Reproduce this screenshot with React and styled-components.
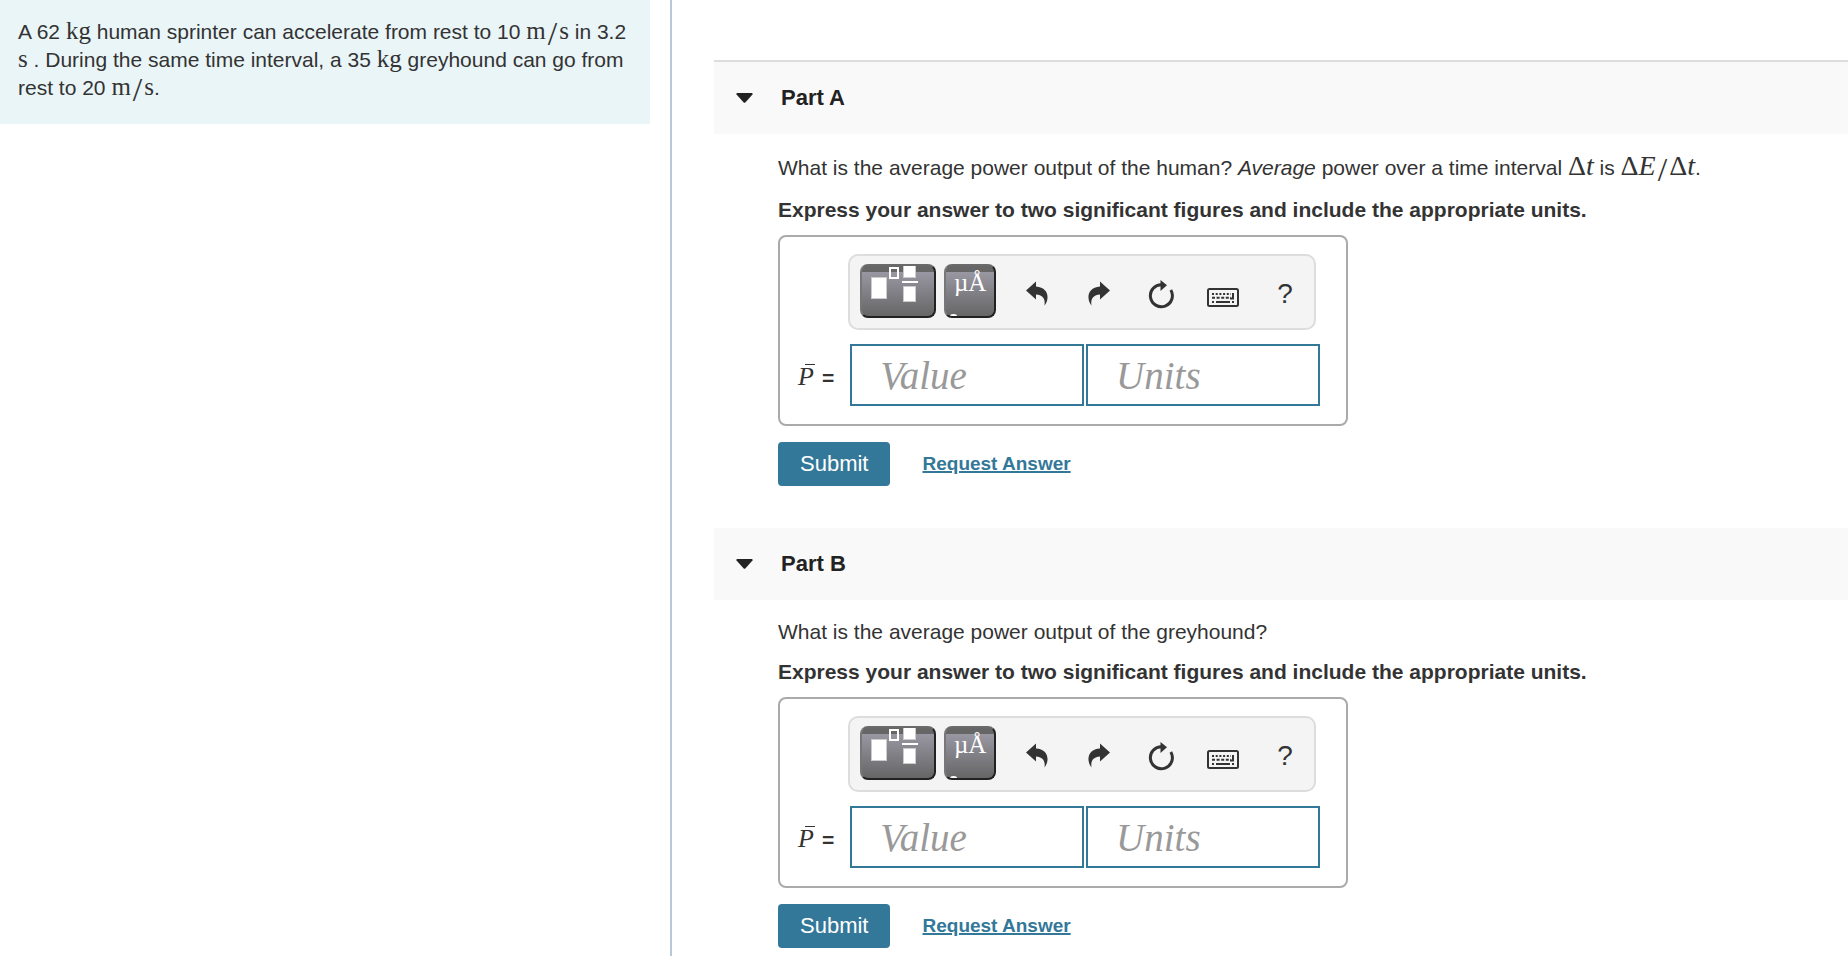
import React, { useState } from 'react';
import styled, { createGlobalStyle } from 'styled-components';

/* ================= STYLES ================= */
const GlobalStyle = createGlobalStyle`
  *{box-sizing:border-box;}
  body{
    margin:0;background:#fff;color:#333;
    font-family:"Liberation Sans",Arial,sans-serif;font-size:21px;line-height:28px;
  }
  button,input{font:inherit;color:inherit;}
`;

const Page = styled.div`display:flex;min-height:100vh;`;
const Sidebar = styled.aside`
  flex:0 0 672px;padding-right:20px;border-right:2px solid #b9c8d6;
`;
const Problem = styled.p`
  margin:0;padding:18px 16px 22px 18px;background:#eaf5f8;
`;
const Main = styled.main`flex:1;min-width:0;padding:60px 0 0 42px;`;

const Part = styled.section`margin-bottom:42px;`;
const PartHeader = styled.h2`
  margin:0;background:#f9f9f9;
  border-top:${p => (p.$divided ? '2px solid #ddd' : 'none')};
`;
const Toggle = styled.button`
  display:flex;align-items:center;gap:28px;width:100%;height:72px;
  padding:0 22px;border:none;background:none;
  font-size:22px;font-weight:bold;color:#222;text-align:left;cursor:pointer;
`;
const PartBody = styled.div`padding:18px 24px 0 64px;`;

const Math = styled.span`
  font-family:"Liberation Serif","Times New Roman",serif;
  font-size:${p => (p.$variables ? '28px' : '25px')};line-height:1;
`;
const Slash = styled.span`
  font-size:34px;line-height:0;margin:0 2px;vertical-align:-6px;
`;
const Question = styled.p`margin:0 0 ${p => (p.$formula ? '14px' : '12px')};`;
const Instruction = styled.p`margin:0 0 11px;font-weight:bold;`;

const AnswerBox = styled.div`
  display:grid;grid-template-columns:max-content minmax(0,1fr);align-items:center;
  column-gap:16px;row-gap:14px;max-width:570px;
  padding:17px 26px 18px 18px;border:2px solid #aaa;border-radius:8px;
`;
const Toolbar = styled.div`
  grid-column:2;display:flex;align-items:flex-start;height:76px;
  margin:0 4px 0 -2px;padding:8px 0 0 10px;
  background:#f4f4f4;border:2px solid #ddd;border-radius:10px;
`;
const PaletteButton = styled.button`
  position:relative;overflow:hidden;flex:none;
  width:${p => p.$width};height:54px;margin-right:8px;padding:0;
  border:2px solid;border-color:#6a6a6a #222 #222 #777;border-radius:8px;
  background:linear-gradient(#666 6px,#9997a2 6px,#666);
  color:#fff;cursor:pointer;
  svg{display:block;}
`;
const UnitGlyphs = styled.span`
  display:block;height:50px;
  font-family:"Liberation Serif","Times New Roman",serif;font-size:25px;line-height:34px;
  &::after{
    content:'';position:absolute;left:4px;bottom:-2px;
    width:7px;height:4px;border-radius:50%;background:#fff;
  }
`;
const ToolButton = styled.button`
  flex:1;height:60px;padding:0 0 0 4px;border:none;background:none;
  display:flex;align-items:center;justify-content:center;
  font-size:28px;cursor:pointer;
`;
const Symbol = styled.label`
  display:flex;align-items:baseline;gap:8px;padding-top:4px;
  white-space:nowrap;font-weight:bold;
`;
const Mean = styled.i`
  position:relative;
  font-family:"Liberation Serif","Times New Roman",serif;font-size:26px;font-weight:normal;
  &::before{
    content:'';position:absolute;top:1px;right:-1px;
    width:10px;height:1px;background:currentColor;
  }
`;
const Fields = styled.div`display:flex;gap:2px;`;
const Field = styled.input`
  flex:1;min-width:0;height:62px;padding:0 28px;
  border:2px solid #337899;border-radius:0;background:#fff;
  font-family:"Liberation Serif","Times New Roman",serif;font-size:39px;
  &::placeholder{color:#999;opacity:1;font-style:italic;}
`;

const Actions = styled.div`display:flex;align-items:center;gap:32px;margin-top:16px;`;
const Submit = styled.button`
  height:44px;padding:0 22px;border:none;border-radius:4px;
  background:#337899;color:#fff;font-size:22px;cursor:pointer;
`;
const RequestLink = styled.a`
  color:#337899;font-size:19px;font-weight:bold;
  text-decoration:underline;text-decoration-thickness:2px;
`;

/* ================= ICONS ================= */
const Caret = () => (
  <svg width="17" height="10" viewBox="0 0 17 10" aria-hidden="true">
    <path d="M1 0h15q1 0.5 0.5 1.5L9.5 9.2q-1 1-2 0L0.5 1.5Q0 0.5 1 0z" fill="#222" />
  </svg>
);

const TemplateIcon = () => (
  <svg width="72" height="50" viewBox="0 0 72 50" aria-hidden="true">
    <g fill="#fff" stroke="#ccc">
      <rect x="9.5" y="11.5" width="15" height="21" />
      <rect x="41.500" y="-0.500" width="12" height="12" />
      <rect x="41.500" y="20.500" width="12" height="15" />
    </g>
    <rect x="40" y="15" width="16" height="2" fill="#fff" />
    <rect x="28" y="2" width="8" height="10" fill="none" stroke="#fff" strokeWidth="2" />
  </svg>
);

const ArrowIcon = ({ flip }) => (
  <svg width="24" height="26" viewBox="0 0 24 26" aria-hidden="true">
    <path
      transform={flip ? 'translate(24 0) scale(-1 1)' : undefined}
      d="M1 9.500L11 0.500V5.500C19 6 23 11 22.500 17C22.300 20 21 22.500 19.500 24.500C20.500 18 18 14 11 13.500V18.500z"
      fill="#333"
    />
  </svg>
);

const ResetIcon = () => (
  <svg width="26" height="30" viewBox="0 0 26 30" aria-hidden="true">
    <path d="M14 5.700A11 11 0 1 0 22.800 11" fill="none" stroke="#333" strokeWidth="3" />
    <path d="M12.500 1L19 6.300L12.500 12z" fill="#333" />
  </svg>
);

const KeyboardIcon = () => (
  <svg width="32" height="26" viewBox="0 -7 32 26" aria-hidden="true">
    <rect x="1" y="1" width="30" height="17" rx="1.500" fill="none" stroke="#333" strokeWidth="2" />
    <g stroke="#333" strokeWidth="2">
      <path d="M5 6H24" strokeDasharray="2 1.700" />
      <path d="M5 9.700H24" strokeDasharray="3 1.600" />
      <path d="M5 14H7M9 14H23M25 14H27M26 5V10.500H23" fill="none" />
    </g>
  </svg>
);

/* ================= COMPONENT ================= */
const MetersPerSecond = () => (
  <Math>m<Slash>/</Slash>s</Math>
);

const PartPanel = ({ id, title, divided, formula, children }) => {
  const [open, setOpen] = useState(true);
  const [value, setValue] = useState('');
  const [units, setUnits] = useState('');

  return (
    <Part>
      <PartHeader $divided={divided}>
        <Toggle aria-expanded={open} onClick={() => setOpen(!open)}>
          <Caret />
          {title}
        </Toggle>
      </PartHeader>

      {open && (
        <PartBody>
          <Question $formula={formula}>{children}</Question>
          <Instruction>
            Express your answer to two significant figures and include the appropriate units.
          </Instruction>

          <AnswerBox>
            <Toolbar role="toolbar" aria-label="Equation tools">
              <PaletteButton $width="76px" aria-label="Templates">
                <TemplateIcon />
              </PaletteButton>
              <PaletteButton $width="52px" aria-label="Unit symbols">
                <UnitGlyphs>µÅ</UnitGlyphs>
              </PaletteButton>
              <ToolButton aria-label="Undo"><ArrowIcon /></ToolButton>
              <ToolButton aria-label="Redo"><ArrowIcon flip /></ToolButton>
              <ToolButton aria-label="Reset"><ResetIcon /></ToolButton>
              <ToolButton aria-label="Keyboard shortcuts"><KeyboardIcon /></ToolButton>
              <ToolButton aria-label="Help">?</ToolButton>
            </Toolbar>
            <Symbol htmlFor={`${id}-value`}>
              <Mean>P</Mean>=
            </Symbol>
            <Fields>
              <Field
                id={`${id}-value`}
                placeholder="Value"
                value={value}
                onChange={e => setValue(e.target.value)}
              />
              <Field
                aria-label="Units"
                placeholder="Units"
                value={units}
                onChange={e => setUnits(e.target.value)}
              />
            </Fields>
          </AnswerBox>

          <Actions>
            <Submit>Submit</Submit>
            <RequestLink href="#request">Request Answer</RequestLink>
          </Actions>
        </PartBody>
      )}
    </Part>
  );
};

const App = () => (
  <Page>
    <GlobalStyle />
    <Sidebar>
      <Problem>
        A 62 <Math>kg</Math> human sprinter can accelerate from rest to 10 <MetersPerSecond /> in
        3.2 <Math>s</Math> . During the same time interval, a 35 <Math>kg</Math> greyhound can go
        from rest to 20 <MetersPerSecond />.
      </Problem>
    </Sidebar>
    <Main>
      <PartPanel id="part-a" title="Part A" divided formula>
        What is the average power output of the human? <em>Average</em> power over a time
        interval <Math $variables>Δ<i>t</i></Math> is{' '}
        <Math $variables>Δ<i>E</i><Slash>/</Slash>Δ<i>t</i></Math>.
      </PartPanel>
      <PartPanel id="part-b" title="Part B">
        What is the average power output of the greyhound?
      </PartPanel>
    </Main>
  </Page>
);

export default App;
